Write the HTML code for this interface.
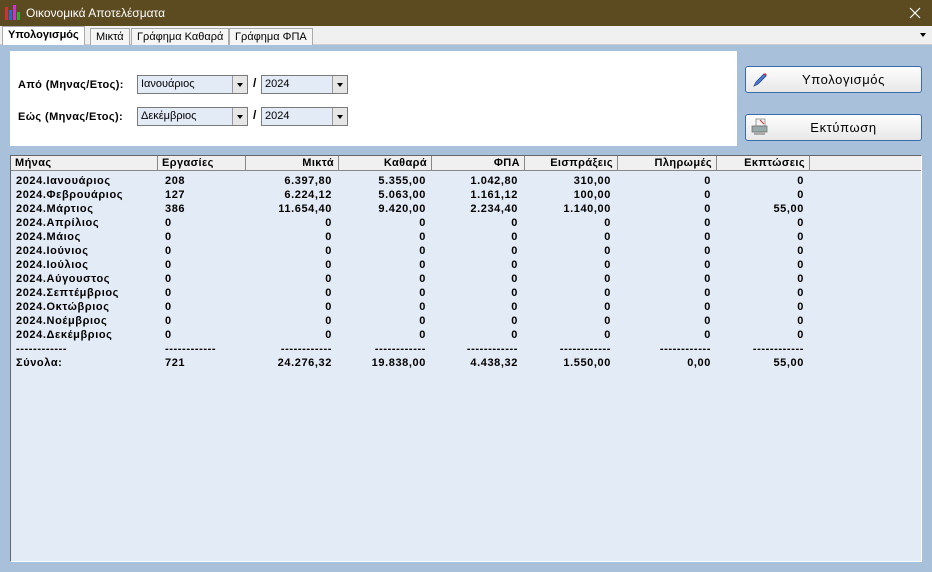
<!DOCTYPE html>
<html><head><meta charset="utf-8"><style>
*{margin:0;padding:0;box-sizing:border-box}
body{width:932px;height:572px;overflow:hidden;background:#a9c0da;font-family:"Liberation Sans","DejaVu Sans",sans-serif;position:relative}
.title{position:absolute;left:0;top:0;width:932px;height:26px;background:#5c4a20;color:#fff;font-size:12px}
.title span{position:absolute;left:26px;top:6px}
.tabs{position:absolute;left:0;top:26px;width:932px;height:19px;background:#f0f0f0;border-bottom:1px solid #ccc}
.tab{position:absolute;top:2px;height:17px;border:1px solid #aaa;border-bottom:none;font-size:11px;padding:2px 5px;background:#f5f5f5}
.panel{position:absolute;left:10px;top:51px;width:727px;height:95px;background:#fff}
.lbl{position:absolute;left:18px;font-size:11px;font-weight:bold;letter-spacing:.4px}
.combo{position:absolute;height:19px;border:1px solid #7a7a7a;background:#e3ebf6;font-size:11px;padding:2px 3px}
.combo i{position:absolute;right:0;top:0;width:15px;height:17px;background:#e6e6e6;border-left:1px solid #999}
.combo i:after{content:"";position:absolute;left:4px;top:7px;border:3.5px solid transparent;border-top:4px solid #000}
.slash{position:absolute;font-size:12px;font-weight:bold}
.btn{position:absolute;left:745px;width:177px;height:27px;border:1px solid #3b6aa8;border-radius:3px;background:linear-gradient(#fdfdfd,#e8e8e8);font-size:13px;text-align:center;line-height:25px;padding-left:20px;letter-spacing:.6px}
.grid{position:absolute;left:10px;top:155px;width:912px;height:407px;background:#e3ebf6;border:1px solid #666;border-right-color:#fff;border-bottom-color:#fff}
.hdr{position:absolute;top:0;height:15px;background:#f0f0f0;border-right:1px solid #888;border-bottom:1px solid #888;font-size:11px;font-weight:bold;padding:1px 4px;letter-spacing:.4px}
.hfill{position:absolute;top:0;left:799px;right:0;height:15px;background:#f0f0f0;border-bottom:1px solid #888}
.row{position:absolute;left:0;height:14px;font-size:11px;font-weight:bold;width:910px;letter-spacing:.6px}
.row span{position:absolute;top:0;white-space:nowrap}
.r{text-align:right}
</style></head><body>
<div class="title"><svg style="position:absolute;left:5px;top:5px" width="15" height="15"><rect x="0" y="2" width="3" height="13" fill="#c33"/><rect x="4" y="5" width="3" height="10" fill="#36c"/><rect x="8" y="0" width="3" height="15" fill="#c3c"/><rect x="12" y="7" width="3" height="8" fill="#3a3"/></svg><span>Οικονομικά Αποτελέσματα</span>
<svg style="position:absolute;left:909px;top:7px" width="12" height="12"><path d="M1 1L11 11M11 1L1 11" stroke="#fff" stroke-width="1.2"/></svg></div>
<div class="tabs">
<div class="tab" style="left:2px;top:0;height:19px;background:#fff;font-weight:bold">Υπολογισμός</div>
<div class="tab" style="left:90px">Μικτά</div>
<div class="tab" style="left:131px">Γράφημα Καθαρά</div>
<div class="tab" style="left:229px">Γράφημα ΦΠΑ</div>
<div style="position:absolute;left:920px;top:7px;border:3px solid transparent;border-top:4px solid #000"></div>
</div>
<div class="panel"></div>
<div class="lbl" style="top:79px">Από (Μηνας/Ετος):</div>
<div class="lbl" style="top:111px">Εώς (Μηνας/Ετος):</div>
<div class="combo" style="left:137px;top:75px;width:111px">Ιανουάριος<i></i></div>
<div class="slash" style="left:253px;top:76px">/</div>
<div class="combo" style="left:261px;top:75px;width:87px">2024<i></i></div>
<div class="combo" style="left:137px;top:107px;width:111px">Δεκέμβριος<i></i></div>
<div class="slash" style="left:253px;top:108px">/</div>
<div class="combo" style="left:261px;top:107px;width:87px">2024<i></i></div>
<div class="btn" style="top:66px"><svg style="position:absolute;left:6px;top:5px" width="16" height="16"><path d="M2 14L4 10L12 2L14 4L6 12Z" fill="#4a7bd0" stroke="#2a4a90" stroke-width=".8"/><path d="M12 2L14 4L15 3L13 1Z" fill="#d33"/></svg>Υπολογισμός</div>
<div class="btn" style="top:114px"><svg style="position:absolute;left:5px;top:3px" width="18" height="18"><rect x="5" y="1" width="9" height="7" fill="#f4f4f4" stroke="#777" stroke-width=".7"/><path d="M9 2L13 6" stroke="#c33"/><rect x="1" y="8" width="15" height="6" fill="#9aa" stroke="#666" stroke-width=".7"/><rect x="3" y="14" width="11" height="3" fill="#aaa"/></svg>Εκτύπωση</div>
<div class="grid">
<div class="hdr" style="left:0;width:147px">Μήνας</div>
<div class="hdr" style="left:147px;width:88px">Εργασίες</div>
<div class="hdr r" style="left:235px;width:93px">Μικτά</div>
<div class="hdr r" style="left:328px;width:93px">Καθαρά</div>
<div class="hdr r" style="left:421px;width:93px">ΦΠΑ</div>
<div class="hdr r" style="left:514px;width:93px">Εισπράξεις</div>
<div class="hdr r" style="left:607px;width:99px">Πληρωμές</div>
<div class="hdr r" style="left:706px;width:93px">Εκπτώσεις</div>
<div class="hfill"></div>
<div id="rows"></div>
</div>
<script>
var d=[["2024.Ιανουάριος","208","6.397,80","5.355,00","1.042,80","310,00","0","0"],
["2024.Φεβρουάριος","127","6.224,12","5.063,00","1.161,12","100,00","0","0"],
["2024.Μάρτιος","386","11.654,40","9.420,00","2.234,40","1.140,00","0","55,00"]];
var m=["Απρίλιος","Μάιος","Ιούνιος","Ιούλιος","Αύγουστος","Σεπτέμβριος","Οκτώβριος","Νοέμβριος","Δεκέμβριος"];
m.forEach(function(x){d.push(["2024."+x,"0","0","0","0","0","0","0"])});
var s="------------";d.push([s,s,s,s,s,s,s,s]);
d.push(["Σύνολα:","721","24.276,32","19.838,00","4.438,32","1.550,00","0,00","55,00"]);
var ends=[321,415,507,600,700,793],h="";
d.forEach(function(r,i){h+='<div class="row" style="top:'+(19+i*14)+'px"><span style="left:5px">'+r[0]+'</span><span style="left:154px">'+r[1]+'</span>';
for(var j=0;j<6;j++)h+='<span class="r" style="left:'+(ends[j]-90)+'px;width:90px">'+r[j+2]+'</span>';h+='</div>'});
document.getElementById('rows').innerHTML=h;
</script>
</body></html>
